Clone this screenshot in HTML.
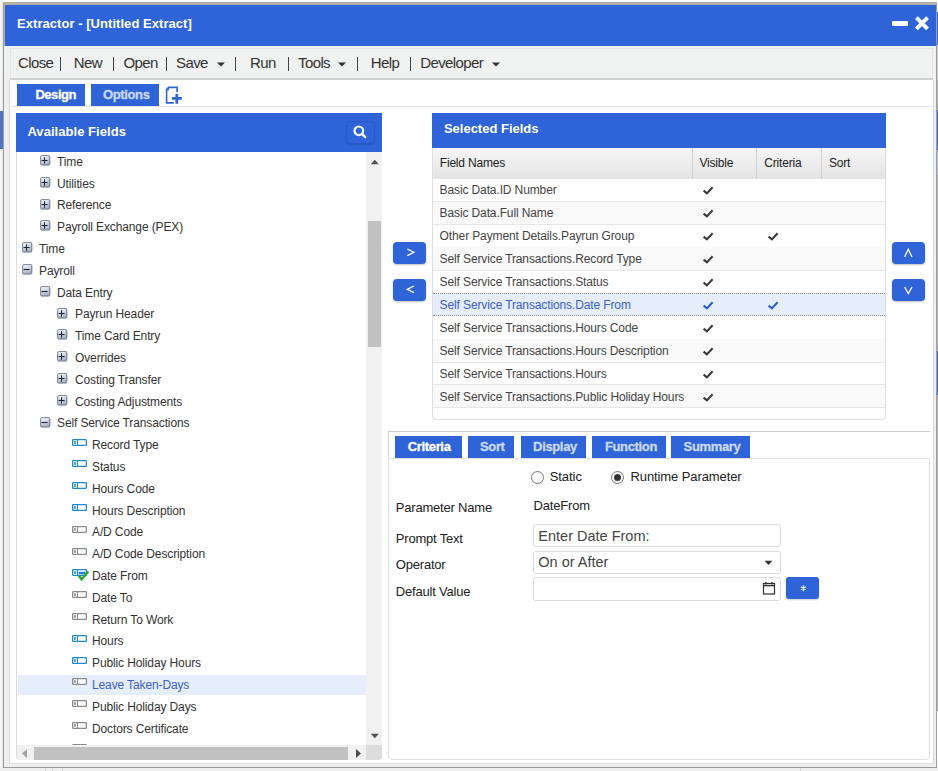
<!DOCTYPE html>
<html><head><meta charset="utf-8">
<style>
*{box-sizing:border-box;margin:0;padding:0}
html,body{width:938px;height:771px;overflow:hidden;background:#fff;font-family:"Liberation Sans",sans-serif;color:#333}
body{position:relative}
.a{position:absolute}
.t{position:absolute;white-space:nowrap;line-height:1}
</style></head><body>
<svg width="0" height="0" style="position:absolute"><defs><linearGradient id="eg" x1="0" y1="0" x2="0.3" y2="1"><stop offset="0" stop-color="#f4f6fa"/><stop offset="0.5" stop-color="#d3d9e3"/><stop offset="1" stop-color="#aab3c3"/></linearGradient></defs></svg>
<div class="a" style="left:0px;top:767px;width:938px;height:4px;background:#eeeeee"></div>
<div class="a" style="left:45px;top:768px;width:1px;height:3px;background:#d6d6d6"></div>
<div class="a" style="left:52px;top:768px;width:1px;height:3px;background:#d6d6d6"></div>
<div class="a" style="left:62px;top:768px;width:1px;height:3px;background:#d6d6d6"></div>
<div class="a" style="left:800px;top:768px;width:1px;height:3px;background:#d6d6d6"></div>
<div class="a" style="left:0px;top:0px;width:3px;height:767px;background:linear-gradient(to right,#fdfdfd,#e4e4e4)"></div>
<div class="a" style="left:0px;top:111px;width:3px;height:38px;background:#4f75c9"></div>
<div class="a" style="left:937px;top:45px;width:1px;height:666px;background:#b4b4b4"></div>
<div class="a" style="left:937px;top:12px;width:1px;height:33px;background:#3d6bd5"></div>
<div class="a" style="left:937px;top:45px;width:1px;height:35px;background:#c9c9c9"></div>
<div class="a" style="left:937px;top:110px;width:1px;height:40px;background:#3d6bd5"></div>
<div class="a" style="left:937px;top:150px;width:1px;height:25px;background:#b8c4dc"></div>
<div class="a" style="left:937px;top:351px;width:1px;height:44px;background:#3d6bd5"></div>
<div class="a" style="left:3px;top:2px;width:934px;height:766px;background:#efefef;border:1px solid #9c9c9c;border-top:3px solid #b0b0b0"></div>
<div class="a" style="left:4px;top:4px;width:932px;height:1px;background:#b3aea6"></div>
<div class="a" style="left:4px;top:4px;width:1px;height:42px;background:#b3aea6"></div>
<div class="a" style="left:5px;top:5px;width:931px;height:41px;background:#2e64d8"></div>
<div class="t" style="left:17px;top:17.10px;font-size:13px;font-weight:700;color:#fff;letter-spacing:0.05px;">Extractor - [Untitled Extract]</div>
<div class="a" style="left:892px;top:21px;width:16px;height:5px;background:#fff;border-radius:1px"></div>
<svg class="a" style="left:913px;top:14px" width="18" height="18" viewBox="0 0 18 18"><path d="M3.4 3.6 L14.6 14.8 M14.6 3.6 L3.4 14.8" stroke="#fff" stroke-width="3.9"/></svg>
<div class="a" style="left:5px;top:46px;width:931px;height:33px;background:#f0f1f1"></div>
<div class="a" style="left:10px;top:48px;width:923px;height:31px;border-top:1px solid #e3e4e4;border-left:1px solid #e3e4e4;border-right:1px solid #e3e4e4"></div>
<div class="a" style="left:10px;top:78px;width:923px;height:2px;background:#cfcfcf"></div>
<div class="t" style="left:18px;top:54.90px;font-size:15px;font-weight:400;color:#333;letter-spacing:-0.6px;">Close</div>
<div class="t" style="left:73.8px;top:54.90px;font-size:15px;font-weight:400;color:#333;letter-spacing:-0.6px;">New</div>
<div class="t" style="left:123.4px;top:54.90px;font-size:15px;font-weight:400;color:#333;letter-spacing:-0.6px;">Open</div>
<div class="t" style="left:176px;top:54.90px;font-size:15px;font-weight:400;color:#333;letter-spacing:-0.6px;">Save</div>
<div class="t" style="left:250px;top:54.90px;font-size:15px;font-weight:400;color:#333;letter-spacing:-0.6px;">Run</div>
<div class="t" style="left:298px;top:54.90px;font-size:15px;font-weight:400;color:#333;letter-spacing:-0.6px;">Tools</div>
<div class="t" style="left:370.7px;top:54.90px;font-size:15px;font-weight:400;color:#333;letter-spacing:-0.6px;">Help</div>
<div class="t" style="left:420.2px;top:54.90px;font-size:15px;font-weight:400;color:#333;letter-spacing:-0.6px;">Developer</div>
<div class="a" style="left:59.8px;top:56.8px;width:1.2px;height:14.7px;background:#444"></div>
<div class="a" style="left:112.8px;top:56.8px;width:1.2px;height:14.7px;background:#444"></div>
<div class="a" style="left:166.1px;top:56.8px;width:1.2px;height:14.7px;background:#444"></div>
<div class="a" style="left:235.1px;top:56.8px;width:1.2px;height:14.7px;background:#444"></div>
<div class="a" style="left:287.5px;top:56.8px;width:1.2px;height:14.7px;background:#444"></div>
<div class="a" style="left:356.9px;top:56.8px;width:1.2px;height:14.7px;background:#444"></div>
<div class="a" style="left:409.8px;top:56.8px;width:1.2px;height:14.7px;background:#444"></div>
<svg class="a" style="left:217px;top:62px" width="8" height="5" viewBox="0 0 8 5"><path d="M0 0.5 L8 0.5 L4 4.5 Z" fill="#333"/></svg>
<svg class="a" style="left:338px;top:62px" width="8" height="5" viewBox="0 0 8 5"><path d="M0 0.5 L8 0.5 L4 4.5 Z" fill="#333"/></svg>
<svg class="a" style="left:492px;top:62px" width="8" height="5" viewBox="0 0 8 5"><path d="M0 0.5 L8 0.5 L4 4.5 Z" fill="#333"/></svg>
<div class="a" style="left:9px;top:80px;width:925px;height:684px;background:#fff;border-left:1px solid #dcdcdc;border-right:1px solid #dcdcdc;border-bottom:1px solid #e0e0e0"></div>
<div class="a" style="left:17px;top:84px;width:68px;height:22px;background:#2e64d8"></div>
<div class="t" style="left:35.4px;top:88.10px;font-size:13px;font-weight:700;color:#fff;letter-spacing:-0.45px;-webkit-text-stroke:0.3px #fff">Design</div>
<div class="a" style="left:91px;top:84px;width:68px;height:22px;background:#2e64d8"></div>
<div class="t" style="left:102.9px;top:88.10px;font-size:13px;font-weight:700;color:#c9d8f6;letter-spacing:-0.35px;-webkit-text-stroke:0.3px #c9d8f6">Options</div>
<div class="a" style="left:11px;top:106px;width:922px;height:1px;background:#e6e6e6"></div>
<svg class="a" style="left:164px;top:85px" width="20" height="20" viewBox="0 0 20 20">
<path d="M9.8 17.9 H2.6 V4.6 L4.6 2.4 H13.1 V7.3" fill="none" stroke="#2e64d8" stroke-width="1.6"/>
<path d="M2.6 5.2 L5.2 2.4 V5.2 Z" fill="#2e64d8"/>
<path d="M8 13.4 H17.9 M12.8 9 V18.7" stroke="#2e64d8" stroke-width="2.7"/>
</svg>
<div class="a" style="left:16px;top:113px;width:366px;height:38.5px;background:#2e64d8"></div>
<div class="t" style="left:27.4px;top:124.50px;font-size:13px;font-weight:700;color:#fff;letter-spacing:0.05px;">Available Fields</div>
<div class="a" style="left:346px;top:120.5px;width:28.5px;height:23px;border-radius:4px;border:1px solid rgba(0,0,40,0.10);box-shadow:0 1px 1px rgba(0,0,40,0.12)"></div>
<svg class="a" style="left:352px;top:124px" width="16" height="16" viewBox="0 0 16 16"><circle cx="6.8" cy="6.8" r="4.3" fill="none" stroke="#fff" stroke-width="2.2"/><path d="M10 10 L13.2 13.2" stroke="#fff" stroke-width="2.4" stroke-linecap="round"/></svg>
<div class="a" style="left:16px;top:151.5px;width:366px;height:608.5px;background:#fff;border-left:1px solid #dcdcdc;border-bottom-right-radius:4px;border-bottom-left-radius:4px;overflow:hidden"></div>
<div class="a" style="left:18px;top:675.0px;width:348px;height:19.7px;background:#e6edfb"></div>
<svg class="a" style="left:40px;top:155px" width="11" height="11" viewBox="0 0 11 11"><rect x="0.55" y="0.55" width="9.3" height="9.5" rx="1.6" fill="url(#eg)" stroke="#838ea3" stroke-width="1.1"/><path d="M1.5 9.9 H9.3 M9.4 1.8 V9.6" stroke="#75809a" stroke-width="0.9" opacity="0.7"/><path d="M1.5 5.5 H7.6" stroke="#1b2540" stroke-width="1.1"/><path d="M4.5 2.2 V8.8" stroke="#1b2540" stroke-width="1"/></svg>
<div class="t" style="left:57px;top:155.74px;font-size:12px;font-weight:400;color:#333;letter-spacing:-0.12px;">Time</div>
<svg class="a" style="left:40px;top:177px" width="11" height="11" viewBox="0 0 11 11"><rect x="0.55" y="0.55" width="9.3" height="9.5" rx="1.6" fill="url(#eg)" stroke="#838ea3" stroke-width="1.1"/><path d="M1.5 9.9 H9.3 M9.4 1.8 V9.6" stroke="#75809a" stroke-width="0.9" opacity="0.7"/><path d="M1.5 5.5 H7.6" stroke="#1b2540" stroke-width="1.1"/><path d="M4.5 2.2 V8.8" stroke="#1b2540" stroke-width="1"/></svg>
<div class="t" style="left:57px;top:177.54px;font-size:12px;font-weight:400;color:#333;letter-spacing:-0.12px;">Utilities</div>
<svg class="a" style="left:40px;top:199px" width="11" height="11" viewBox="0 0 11 11"><rect x="0.55" y="0.55" width="9.3" height="9.5" rx="1.6" fill="url(#eg)" stroke="#838ea3" stroke-width="1.1"/><path d="M1.5 9.9 H9.3 M9.4 1.8 V9.6" stroke="#75809a" stroke-width="0.9" opacity="0.7"/><path d="M1.5 5.5 H7.6" stroke="#1b2540" stroke-width="1.1"/><path d="M4.5 2.2 V8.8" stroke="#1b2540" stroke-width="1"/></svg>
<div class="t" style="left:57px;top:199.34px;font-size:12px;font-weight:400;color:#333;letter-spacing:-0.12px;">Reference</div>
<svg class="a" style="left:40px;top:220px" width="11" height="11" viewBox="0 0 11 11"><rect x="0.55" y="0.55" width="9.3" height="9.5" rx="1.6" fill="url(#eg)" stroke="#838ea3" stroke-width="1.1"/><path d="M1.5 9.9 H9.3 M9.4 1.8 V9.6" stroke="#75809a" stroke-width="0.9" opacity="0.7"/><path d="M1.5 5.5 H7.6" stroke="#1b2540" stroke-width="1.1"/><path d="M4.5 2.2 V8.8" stroke="#1b2540" stroke-width="1"/></svg>
<div class="t" style="left:57px;top:221.14px;font-size:12px;font-weight:400;color:#333;letter-spacing:-0.12px;">Payroll Exchange (PEX)</div>
<svg class="a" style="left:22px;top:242px" width="11" height="11" viewBox="0 0 11 11"><rect x="0.55" y="0.55" width="9.3" height="9.5" rx="1.6" fill="url(#eg)" stroke="#838ea3" stroke-width="1.1"/><path d="M1.5 9.9 H9.3 M9.4 1.8 V9.6" stroke="#75809a" stroke-width="0.9" opacity="0.7"/><path d="M1.5 5.5 H7.6" stroke="#1b2540" stroke-width="1.1"/><path d="M4.5 2.2 V8.8" stroke="#1b2540" stroke-width="1"/></svg>
<div class="t" style="left:39px;top:242.94px;font-size:12px;font-weight:400;color:#333;letter-spacing:-0.12px;">Time</div>
<svg class="a" style="left:22px;top:264px" width="11" height="11" viewBox="0 0 11 11"><rect x="0.55" y="0.55" width="9.3" height="9.5" rx="1.6" fill="url(#eg)" stroke="#838ea3" stroke-width="1.1"/><path d="M1.5 9.9 H9.3 M9.4 1.8 V9.6" stroke="#75809a" stroke-width="0.9" opacity="0.7"/><path d="M1.5 5.5 H7.6" stroke="#1b2540" stroke-width="1.1"/></svg>
<div class="t" style="left:39px;top:264.74px;font-size:12px;font-weight:400;color:#333;letter-spacing:-0.12px;">Payroll</div>
<svg class="a" style="left:40px;top:286px" width="11" height="11" viewBox="0 0 11 11"><rect x="0.55" y="0.55" width="9.3" height="9.5" rx="1.6" fill="url(#eg)" stroke="#838ea3" stroke-width="1.1"/><path d="M1.5 9.9 H9.3 M9.4 1.8 V9.6" stroke="#75809a" stroke-width="0.9" opacity="0.7"/><path d="M1.5 5.5 H7.6" stroke="#1b2540" stroke-width="1.1"/></svg>
<div class="t" style="left:57px;top:286.54px;font-size:12px;font-weight:400;color:#333;letter-spacing:-0.12px;">Data Entry</div>
<svg class="a" style="left:57px;top:308px" width="11" height="11" viewBox="0 0 11 11"><rect x="0.55" y="0.55" width="9.3" height="9.5" rx="1.6" fill="url(#eg)" stroke="#838ea3" stroke-width="1.1"/><path d="M1.5 9.9 H9.3 M9.4 1.8 V9.6" stroke="#75809a" stroke-width="0.9" opacity="0.7"/><path d="M1.5 5.5 H7.6" stroke="#1b2540" stroke-width="1.1"/><path d="M4.5 2.2 V8.8" stroke="#1b2540" stroke-width="1"/></svg>
<div class="t" style="left:75px;top:308.34px;font-size:12px;font-weight:400;color:#333;letter-spacing:-0.12px;">Payrun Header</div>
<svg class="a" style="left:57px;top:329px" width="11" height="11" viewBox="0 0 11 11"><rect x="0.55" y="0.55" width="9.3" height="9.5" rx="1.6" fill="url(#eg)" stroke="#838ea3" stroke-width="1.1"/><path d="M1.5 9.9 H9.3 M9.4 1.8 V9.6" stroke="#75809a" stroke-width="0.9" opacity="0.7"/><path d="M1.5 5.5 H7.6" stroke="#1b2540" stroke-width="1.1"/><path d="M4.5 2.2 V8.8" stroke="#1b2540" stroke-width="1"/></svg>
<div class="t" style="left:75px;top:330.14px;font-size:12px;font-weight:400;color:#333;letter-spacing:-0.12px;">Time Card Entry</div>
<svg class="a" style="left:57px;top:351px" width="11" height="11" viewBox="0 0 11 11"><rect x="0.55" y="0.55" width="9.3" height="9.5" rx="1.6" fill="url(#eg)" stroke="#838ea3" stroke-width="1.1"/><path d="M1.5 9.9 H9.3 M9.4 1.8 V9.6" stroke="#75809a" stroke-width="0.9" opacity="0.7"/><path d="M1.5 5.5 H7.6" stroke="#1b2540" stroke-width="1.1"/><path d="M4.5 2.2 V8.8" stroke="#1b2540" stroke-width="1"/></svg>
<div class="t" style="left:75px;top:351.94px;font-size:12px;font-weight:400;color:#333;letter-spacing:-0.12px;">Overrides</div>
<svg class="a" style="left:57px;top:373px" width="11" height="11" viewBox="0 0 11 11"><rect x="0.55" y="0.55" width="9.3" height="9.5" rx="1.6" fill="url(#eg)" stroke="#838ea3" stroke-width="1.1"/><path d="M1.5 9.9 H9.3 M9.4 1.8 V9.6" stroke="#75809a" stroke-width="0.9" opacity="0.7"/><path d="M1.5 5.5 H7.6" stroke="#1b2540" stroke-width="1.1"/><path d="M4.5 2.2 V8.8" stroke="#1b2540" stroke-width="1"/></svg>
<div class="t" style="left:75px;top:373.74px;font-size:12px;font-weight:400;color:#333;letter-spacing:-0.12px;">Costing Transfer</div>
<svg class="a" style="left:57px;top:395px" width="11" height="11" viewBox="0 0 11 11"><rect x="0.55" y="0.55" width="9.3" height="9.5" rx="1.6" fill="url(#eg)" stroke="#838ea3" stroke-width="1.1"/><path d="M1.5 9.9 H9.3 M9.4 1.8 V9.6" stroke="#75809a" stroke-width="0.9" opacity="0.7"/><path d="M1.5 5.5 H7.6" stroke="#1b2540" stroke-width="1.1"/><path d="M4.5 2.2 V8.8" stroke="#1b2540" stroke-width="1"/></svg>
<div class="t" style="left:75px;top:395.54px;font-size:12px;font-weight:400;color:#333;letter-spacing:-0.12px;">Costing Adjustments</div>
<svg class="a" style="left:40px;top:417px" width="11" height="11" viewBox="0 0 11 11"><rect x="0.55" y="0.55" width="9.3" height="9.5" rx="1.6" fill="url(#eg)" stroke="#838ea3" stroke-width="1.1"/><path d="M1.5 9.9 H9.3 M9.4 1.8 V9.6" stroke="#75809a" stroke-width="0.9" opacity="0.7"/><path d="M1.5 5.5 H7.6" stroke="#1b2540" stroke-width="1.1"/></svg>
<div class="t" style="left:57px;top:417.34px;font-size:12px;font-weight:400;color:#333;letter-spacing:-0.12px;">Self Service Transactions</div>
<svg class="a" style="left:72px;top:439px" width="15" height="7" viewBox="0 0 15 7"><rect x="0.65" y="0.65" width="13.7" height="5.7" rx="0.7" fill="#fff" stroke="#1f8ad3" stroke-width="1.3"/><path d="M5.5 1 V6" stroke="#1f8ad3" stroke-width="1"/><rect x="2" y="2.2" width="2" height="2.6" fill="#1f8ad3" opacity="0.85"/></svg>
<div class="t" style="left:92px;top:439.14px;font-size:12px;font-weight:400;color:#333;letter-spacing:-0.12px;">Record Type</div>
<svg class="a" style="left:72px;top:460px" width="15" height="7" viewBox="0 0 15 7"><rect x="0.65" y="0.65" width="13.7" height="5.7" rx="0.7" fill="#fff" stroke="#1f8ad3" stroke-width="1.3"/><path d="M5.5 1 V6" stroke="#1f8ad3" stroke-width="1"/><rect x="2" y="2.2" width="2" height="2.6" fill="#1f8ad3" opacity="0.85"/></svg>
<div class="t" style="left:92px;top:460.94px;font-size:12px;font-weight:400;color:#333;letter-spacing:-0.12px;">Status</div>
<svg class="a" style="left:72px;top:482px" width="15" height="7" viewBox="0 0 15 7"><rect x="0.65" y="0.65" width="13.7" height="5.7" rx="0.7" fill="#fff" stroke="#1f8ad3" stroke-width="1.3"/><path d="M5.5 1 V6" stroke="#1f8ad3" stroke-width="1"/><rect x="2" y="2.2" width="2" height="2.6" fill="#1f8ad3" opacity="0.85"/></svg>
<div class="t" style="left:92px;top:482.74px;font-size:12px;font-weight:400;color:#333;letter-spacing:-0.12px;">Hours Code</div>
<svg class="a" style="left:72px;top:504px" width="15" height="7" viewBox="0 0 15 7"><rect x="0.65" y="0.65" width="13.7" height="5.7" rx="0.7" fill="#fff" stroke="#1f8ad3" stroke-width="1.3"/><path d="M5.5 1 V6" stroke="#1f8ad3" stroke-width="1"/><rect x="2" y="2.2" width="2" height="2.6" fill="#1f8ad3" opacity="0.85"/></svg>
<div class="t" style="left:92px;top:504.54px;font-size:12px;font-weight:400;color:#333;letter-spacing:-0.12px;">Hours Description</div>
<svg class="a" style="left:72px;top:526px" width="15" height="7" viewBox="0 0 15 7"><rect x="0.65" y="0.65" width="13.7" height="5.7" rx="0.7" fill="#fff" stroke="#8a8a8a" stroke-width="1.3"/><path d="M5.5 1 V6" stroke="#8a8a8a" stroke-width="1"/><rect x="2" y="2.2" width="2" height="2.6" fill="#8a8a8a" opacity="0.85"/></svg>
<div class="t" style="left:92px;top:526.34px;font-size:12px;font-weight:400;color:#333;letter-spacing:-0.12px;">A/D Code</div>
<svg class="a" style="left:72px;top:548px" width="15" height="7" viewBox="0 0 15 7"><rect x="0.65" y="0.65" width="13.7" height="5.7" rx="0.7" fill="#fff" stroke="#8a8a8a" stroke-width="1.3"/><path d="M5.5 1 V6" stroke="#8a8a8a" stroke-width="1"/><rect x="2" y="2.2" width="2" height="2.6" fill="#8a8a8a" opacity="0.85"/></svg>
<div class="t" style="left:92px;top:548.14px;font-size:12px;font-weight:400;color:#333;letter-spacing:-0.12px;">A/D Code Description</div>
<svg class="a" style="left:72px;top:569px" width="15" height="7" viewBox="0 0 15 7"><rect x="0.65" y="0.65" width="13.7" height="5.7" rx="0.7" fill="#fff" stroke="#1f8ad3" stroke-width="1.3"/><path d="M5.5 1 V6" stroke="#1f8ad3" stroke-width="1"/><rect x="2" y="2.2" width="2" height="2.6" fill="#1f8ad3" opacity="0.85"/></svg>
<svg class="a" style="left:75px;top:569.9px" width="16" height="13" viewBox="0 0 16 13"><path d="M7.5 1.6 H2 V5" fill="none" stroke="#fff" stroke-width="0"/><rect x="3.6" y="1.8" width="6.5" height="2.4" fill="#2a7fd0"/><path d="M3.8 5.7 L6.6 9.4 L13.3 1.4" fill="none" stroke="#2aa52a" stroke-width="2.4"/></svg>
<div class="t" style="left:92px;top:569.94px;font-size:12px;font-weight:400;color:#333;letter-spacing:-0.12px;">Date From</div>
<svg class="a" style="left:72px;top:591px" width="15" height="7" viewBox="0 0 15 7"><rect x="0.65" y="0.65" width="13.7" height="5.7" rx="0.7" fill="#fff" stroke="#8a8a8a" stroke-width="1.3"/><path d="M5.5 1 V6" stroke="#8a8a8a" stroke-width="1"/><rect x="2" y="2.2" width="2" height="2.6" fill="#8a8a8a" opacity="0.85"/></svg>
<div class="t" style="left:92px;top:591.74px;font-size:12px;font-weight:400;color:#333;letter-spacing:-0.12px;">Date To</div>
<svg class="a" style="left:72px;top:613px" width="15" height="7" viewBox="0 0 15 7"><rect x="0.65" y="0.65" width="13.7" height="5.7" rx="0.7" fill="#fff" stroke="#8a8a8a" stroke-width="1.3"/><path d="M5.5 1 V6" stroke="#8a8a8a" stroke-width="1"/><rect x="2" y="2.2" width="2" height="2.6" fill="#8a8a8a" opacity="0.85"/></svg>
<div class="t" style="left:92px;top:613.54px;font-size:12px;font-weight:400;color:#333;letter-spacing:-0.12px;">Return To Work</div>
<svg class="a" style="left:72px;top:635px" width="15" height="7" viewBox="0 0 15 7"><rect x="0.65" y="0.65" width="13.7" height="5.7" rx="0.7" fill="#fff" stroke="#1f8ad3" stroke-width="1.3"/><path d="M5.5 1 V6" stroke="#1f8ad3" stroke-width="1"/><rect x="2" y="2.2" width="2" height="2.6" fill="#1f8ad3" opacity="0.85"/></svg>
<div class="t" style="left:92px;top:635.34px;font-size:12px;font-weight:400;color:#333;letter-spacing:-0.12px;">Hours</div>
<svg class="a" style="left:72px;top:657px" width="15" height="7" viewBox="0 0 15 7"><rect x="0.65" y="0.65" width="13.7" height="5.7" rx="0.7" fill="#fff" stroke="#1f8ad3" stroke-width="1.3"/><path d="M5.5 1 V6" stroke="#1f8ad3" stroke-width="1"/><rect x="2" y="2.2" width="2" height="2.6" fill="#1f8ad3" opacity="0.85"/></svg>
<div class="t" style="left:92px;top:657.14px;font-size:12px;font-weight:400;color:#333;letter-spacing:-0.12px;">Public Holiday Hours</div>
<svg class="a" style="left:72px;top:678px" width="15" height="7" viewBox="0 0 15 7"><rect x="0.65" y="0.65" width="13.7" height="5.7" rx="0.7" fill="#fff" stroke="#8a8a8a" stroke-width="1.3"/><path d="M5.5 1 V6" stroke="#8a8a8a" stroke-width="1"/><rect x="2" y="2.2" width="2" height="2.6" fill="#8a8a8a" opacity="0.85"/></svg>
<div class="t" style="left:92px;top:678.94px;font-size:12px;font-weight:400;color:#3a5fcf;letter-spacing:-0.12px;">Leave Taken-Days</div>
<svg class="a" style="left:72px;top:700px" width="15" height="7" viewBox="0 0 15 7"><rect x="0.65" y="0.65" width="13.7" height="5.7" rx="0.7" fill="#fff" stroke="#8a8a8a" stroke-width="1.3"/><path d="M5.5 1 V6" stroke="#8a8a8a" stroke-width="1"/><rect x="2" y="2.2" width="2" height="2.6" fill="#8a8a8a" opacity="0.85"/></svg>
<div class="t" style="left:92px;top:700.74px;font-size:12px;font-weight:400;color:#333;letter-spacing:-0.12px;">Public Holiday Days</div>
<svg class="a" style="left:72px;top:722px" width="15" height="7" viewBox="0 0 15 7"><rect x="0.65" y="0.65" width="13.7" height="5.7" rx="0.7" fill="#fff" stroke="#8a8a8a" stroke-width="1.3"/><path d="M5.5 1 V6" stroke="#8a8a8a" stroke-width="1"/><rect x="2" y="2.2" width="2" height="2.6" fill="#8a8a8a" opacity="0.85"/></svg>
<div class="t" style="left:92px;top:722.54px;font-size:12px;font-weight:400;color:#333;letter-spacing:-0.12px;">Doctors Certificate</div>
<svg class="a" style="left:72px;top:744px" width="15" height="7" viewBox="0 0 15 7"><rect x="0.65" y="0.65" width="13.7" height="5.7" rx="0.7" fill="#fff" stroke="#8a8a8a" stroke-width="1.3"/><path d="M5.5 1 V6" stroke="#8a8a8a" stroke-width="1"/><rect x="2" y="2.2" width="2" height="2.6" fill="#8a8a8a" opacity="0.85"/></svg>
<div class="a" style="left:366px;top:151.5px;width:16px;height:593.5px;background:#f1f1f1"></div>
<div class="a" style="left:368px;top:221px;width:13px;height:126px;background:#c1c1c1"></div>
<svg class="a" style="left:370px;top:159px" width="10" height="6" viewBox="0 0 10 6"><path d="M0.8 5.2 L8.8 5.2 L4.8 0.8 Z" fill="#505050"/></svg>
<svg class="a" style="left:370px;top:733px" width="10" height="6" viewBox="0 0 10 6"><path d="M0.8 0.8 L8.8 0.8 L4.8 5.2 Z" fill="#505050"/></svg>
<div class="a" style="left:17px;top:745px;width:349px;height:15px;background:#f1f1f1"></div>
<div class="a" style="left:34px;top:747px;width:314px;height:13px;background:#c1c1c1"></div>
<svg class="a" style="left:21px;top:748px" width="7" height="11" viewBox="0 0 7 11"><path d="M6 1 L6 10 L1 5.5 Z" fill="#a3a3a3"/></svg>
<svg class="a" style="left:355px;top:748px" width="7" height="11" viewBox="0 0 7 11"><path d="M1 1 L1 10 L6 5.5 Z" fill="#505050"/></svg>
<div class="a" style="left:366px;top:745px;width:16px;height:15px;background:#dcdcdc;border-bottom-right-radius:4px"></div>
<div class="a" style="left:393px;top:242px;width:33px;height:22px;background:#2e64d8;border-radius:4px;box-shadow:0 1px 2px rgba(0,0,0,0.25);color:#fff;font-size:14px;line-height:22px;text-align:center"></div>
<div class="a" style="left:393px;top:279px;width:33px;height:22px;background:#2e64d8;border-radius:4px;box-shadow:0 1px 2px rgba(0,0,0,0.25);color:#fff;font-size:14px;line-height:22px;text-align:center"></div>
<div class="a" style="left:892px;top:242px;width:33px;height:22px;background:#2e64d8;border-radius:4px;box-shadow:0 1px 2px rgba(0,0,0,0.25);color:#fff;font-size:14px;line-height:22px;text-align:center"></div>
<div class="a" style="left:892px;top:279.3px;width:33px;height:21.7px;background:#2e64d8;border-radius:4px;box-shadow:0 1px 2px rgba(0,0,0,0.25);color:#fff;font-size:14px;line-height:21.7px;text-align:center"></div>
<svg class="a" style="left:406px;top:248px" width="10" height="10" viewBox="0 0 10 10"><path d="M1.3 1 L7.9 4.3 L1.3 7.6" fill="none" stroke="#fff" stroke-width="1.3"/></svg>
<svg class="a" style="left:406px;top:285px" width="10" height="10" viewBox="0 0 10 10"><path d="M7.9 1 L1.3 4.3 L7.9 7.6" fill="none" stroke="#fff" stroke-width="1.3"/></svg>
<svg class="a" style="left:903px;top:248px" width="11" height="10" viewBox="0 0 11 10"><path d="M1.6 9 L5.3 1.3 L9 9" fill="none" stroke="#fff" stroke-width="1.3"/></svg>
<svg class="a" style="left:903px;top:286px" width="11" height="9" viewBox="0 0 11 9"><path d="M1.6 1 L5.3 7.6 L9 1" fill="none" stroke="#fff" stroke-width="1.3"/></svg>
<div class="a" style="left:432.3px;top:113.4px;width:453.5px;height:34.6px;background:#2e64d8"></div>
<div class="t" style="left:443.9px;top:121.80px;font-size:13px;font-weight:700;color:#fff;">Selected Fields</div>
<div class="a" style="left:432.3px;top:148px;width:453.5px;height:271.6px;background:#fff;border:1px solid #dedede;border-top:none;border-radius:0 0 4px 4px"></div>
<div class="a" style="left:433px;top:148px;width:452px;height:30.6px;background:linear-gradient(#f6f6f6,#e4e4e4)"></div>
<div class="a" style="left:692.1px;top:148px;width:1px;height:30.6px;background:#d2d2d2"></div>
<div class="a" style="left:755.8px;top:148px;width:1px;height:30.6px;background:#d2d2d2"></div>
<div class="a" style="left:821.0px;top:148px;width:1px;height:30.6px;background:#d2d2d2"></div>
<div class="t" style="left:439.8px;top:156.74px;font-size:12px;font-weight:400;color:#222;letter-spacing:-0.2px;">Field Names</div>
<div class="t" style="left:699.4px;top:156.74px;font-size:12px;font-weight:400;color:#222;letter-spacing:-0.2px;">Visible</div>
<div class="t" style="left:764.3px;top:156.74px;font-size:12px;font-weight:400;color:#222;letter-spacing:-0.2px;">Criteria</div>
<div class="t" style="left:829px;top:156.74px;font-size:12px;font-weight:400;color:#222;letter-spacing:-0.2px;">Sort</div>
<div class="a" style="left:433px;top:201.1px;width:452px;height:1px;background:#e6e6e6"></div>
<div class="t" style="left:439.6px;top:183.64px;font-size:12px;font-weight:400;color:#444;letter-spacing:-0.12px;">Basic Data.ID Number</div>
<svg class="a" style="left:701.5px;top:185.4px" width="12" height="10" viewBox="0 0 12 10"><path d="M1.6 5.6 L4.9 8.4 L10.6 2.2" fill="none" stroke="#3a3a3a" stroke-width="2.1"/></svg>
<div class="a" style="left:433px;top:201.51999999999998px;width:452px;height:22.92px;background:#f9f9f9"></div>
<div class="a" style="left:433px;top:224.01999999999998px;width:452px;height:1px;background:#e6e6e6"></div>
<div class="t" style="left:439.6px;top:206.64px;font-size:12px;font-weight:400;color:#444;letter-spacing:-0.12px;">Basic Data.Full Name</div>
<svg class="a" style="left:701.5px;top:208.4px" width="12" height="10" viewBox="0 0 12 10"><path d="M1.6 5.6 L4.9 8.4 L10.6 2.2" fill="none" stroke="#3a3a3a" stroke-width="2.1"/></svg>
<div class="a" style="left:433px;top:246.94px;width:452px;height:1px;background:#e6e6e6"></div>
<div class="t" style="left:439.6px;top:229.64px;font-size:12px;font-weight:400;color:#444;letter-spacing:-0.12px;">Other Payment Details.Payrun Group</div>
<svg class="a" style="left:701.5px;top:231.4px" width="12" height="10" viewBox="0 0 12 10"><path d="M1.6 5.6 L4.9 8.4 L10.6 2.2" fill="none" stroke="#3a3a3a" stroke-width="2.1"/></svg>
<svg class="a" style="left:766.5px;top:231.4px" width="12" height="10" viewBox="0 0 12 10"><path d="M1.6 5.6 L4.9 8.4 L10.6 2.2" fill="none" stroke="#3a3a3a" stroke-width="2.1"/></svg>
<div class="a" style="left:433px;top:247.36px;width:452px;height:22.92px;background:#f9f9f9"></div>
<div class="a" style="left:433px;top:269.86px;width:452px;height:1px;background:#e6e6e6"></div>
<div class="t" style="left:439.6px;top:252.64px;font-size:12px;font-weight:400;color:#444;letter-spacing:-0.12px;">Self Service Transactions.Record Type</div>
<svg class="a" style="left:701.5px;top:254.4px" width="12" height="10" viewBox="0 0 12 10"><path d="M1.6 5.6 L4.9 8.4 L10.6 2.2" fill="none" stroke="#3a3a3a" stroke-width="2.1"/></svg>
<div class="a" style="left:433px;top:292.78px;width:452px;height:1px;background:#e6e6e6"></div>
<div class="t" style="left:439.6px;top:275.64px;font-size:12px;font-weight:400;color:#444;letter-spacing:-0.12px;">Self Service Transactions.Status</div>
<svg class="a" style="left:701.5px;top:277.4px" width="12" height="10" viewBox="0 0 12 10"><path d="M1.6 5.6 L4.9 8.4 L10.6 2.2" fill="none" stroke="#3a3a3a" stroke-width="2.1"/></svg>
<div class="a" style="left:433px;top:293px;width:452px;height:23.4px;background:#e6edfb;border-top:1px dotted #8a8a8a;border-bottom:1px dotted #8a8a8a"></div>
<div class="t" style="left:439.6px;top:298.64px;font-size:12px;font-weight:400;color:#3a5fcf;letter-spacing:-0.12px;">Self Service Transactions.Date From</div>
<svg class="a" style="left:701.5px;top:300.4px" width="12" height="10" viewBox="0 0 12 10"><path d="M1.6 5.6 L4.9 8.4 L10.6 2.2" fill="none" stroke="#2a5bd7" stroke-width="2.1"/></svg>
<svg class="a" style="left:766.5px;top:300.4px" width="12" height="10" viewBox="0 0 12 10"><path d="M1.6 5.6 L4.9 8.4 L10.6 2.2" fill="none" stroke="#2a5bd7" stroke-width="2.1"/></svg>
<div class="a" style="left:433px;top:338.62px;width:452px;height:1px;background:#e6e6e6"></div>
<div class="t" style="left:439.6px;top:321.64px;font-size:12px;font-weight:400;color:#444;letter-spacing:-0.12px;">Self Service Transactions.Hours Code</div>
<svg class="a" style="left:701.5px;top:323.4px" width="12" height="10" viewBox="0 0 12 10"><path d="M1.6 5.6 L4.9 8.4 L10.6 2.2" fill="none" stroke="#3a3a3a" stroke-width="2.1"/></svg>
<div class="a" style="left:433px;top:339.03999999999996px;width:452px;height:22.92px;background:#f9f9f9"></div>
<div class="a" style="left:433px;top:361.53999999999996px;width:452px;height:1px;background:#e6e6e6"></div>
<div class="t" style="left:439.6px;top:344.64px;font-size:12px;font-weight:400;color:#444;letter-spacing:-0.12px;">Self Service Transactions.Hours Description</div>
<svg class="a" style="left:701.5px;top:346.4px" width="12" height="10" viewBox="0 0 12 10"><path d="M1.6 5.6 L4.9 8.4 L10.6 2.2" fill="none" stroke="#3a3a3a" stroke-width="2.1"/></svg>
<div class="a" style="left:433px;top:384.46000000000004px;width:452px;height:1px;background:#e6e6e6"></div>
<div class="t" style="left:439.6px;top:367.64px;font-size:12px;font-weight:400;color:#444;letter-spacing:-0.12px;">Self Service Transactions.Hours</div>
<svg class="a" style="left:701.5px;top:369.4px" width="12" height="10" viewBox="0 0 12 10"><path d="M1.6 5.6 L4.9 8.4 L10.6 2.2" fill="none" stroke="#3a3a3a" stroke-width="2.1"/></svg>
<div class="a" style="left:433px;top:384.88px;width:452px;height:22.92px;background:#f9f9f9"></div>
<div class="a" style="left:433px;top:407.38px;width:452px;height:1px;background:#e6e6e6"></div>
<div class="t" style="left:439.6px;top:390.64px;font-size:12px;font-weight:400;color:#444;letter-spacing:-0.12px;">Self Service Transactions.Public Holiday Hours</div>
<svg class="a" style="left:701.5px;top:392.4px" width="12" height="10" viewBox="0 0 12 10"><path d="M1.6 5.6 L4.9 8.4 L10.6 2.2" fill="none" stroke="#3a3a3a" stroke-width="2.1"/></svg>
<div class="a" style="left:388px;top:431px;width:542px;height:1px;background:#cdcdcd;"></div>
<div class="a" style="left:388px;top:431px;width:1px;height:27px;background:#d0d0d0"></div>
<div class="a" style="left:388px;top:458px;width:542px;height:302.3px;background:#fff;border:1px solid #e0e0e0;border-radius:0 0 4px 4px"></div>
<div class="a" style="left:395px;top:436px;width:67px;height:22px;background:#2e64d8"></div>
<div class="t" style="left:407.8px;top:440.30px;font-size:13px;font-weight:700;color:#fff;letter-spacing:-0.35px;-webkit-text-stroke:0.3px #fff">Criteria</div>
<div class="a" style="left:468px;top:436px;width:45.7px;height:22px;background:#2e64d8"></div>
<div class="t" style="left:480px;top:440.30px;font-size:13px;font-weight:700;color:#c9d8f6;letter-spacing:-0.35px;-webkit-text-stroke:0.3px #c9d8f6">Sort</div>
<div class="a" style="left:521px;top:436px;width:65px;height:22px;background:#2e64d8"></div>
<div class="t" style="left:533.1px;top:440.30px;font-size:13px;font-weight:700;color:#c9d8f6;letter-spacing:-0.35px;-webkit-text-stroke:0.3px #c9d8f6">Display</div>
<div class="a" style="left:592px;top:436px;width:73.7px;height:22px;background:#2e64d8"></div>
<div class="t" style="left:604.9px;top:440.30px;font-size:13px;font-weight:700;color:#c9d8f6;letter-spacing:-0.35px;-webkit-text-stroke:0.3px #c9d8f6">Function</div>
<div class="a" style="left:671px;top:436px;width:78.7px;height:22px;background:#2e64d8"></div>
<div class="t" style="left:683.6px;top:440.30px;font-size:13px;font-weight:700;color:#c9d8f6;letter-spacing:-0.35px;-webkit-text-stroke:0.3px #c9d8f6">Summary</div>
<div class="a" style="left:531px;top:470.5px;width:13px;height:13px;border-radius:50%;border:1px solid #767676;background:#fff"></div>
<div class="t" style="left:549.7px;top:470.20px;font-size:13px;font-weight:400;color:#222;letter-spacing:-0.05px;">Static</div>
<div class="a" style="left:611px;top:470.5px;width:13px;height:13px;border-radius:50%;border:1px solid #767676;background:#fff"></div>
<div class="a" style="left:614px;top:473.5px;width:7px;height:7px;border-radius:50%;background:#333"></div>
<div class="t" style="left:630.5px;top:470.20px;font-size:13px;font-weight:400;color:#222;letter-spacing:-0.1px;">Runtime Parameter</div>
<div class="t" style="left:395.8px;top:501.10px;font-size:13px;font-weight:400;color:#222;letter-spacing:-0.2px;">Parameter Name</div>
<div class="t" style="left:395.8px;top:532.10px;font-size:13px;font-weight:400;color:#222;letter-spacing:-0.2px;">Prompt Text</div>
<div class="t" style="left:395.8px;top:557.90px;font-size:13px;font-weight:400;color:#222;letter-spacing:-0.2px;">Operator</div>
<div class="t" style="left:395.8px;top:585.20px;font-size:13px;font-weight:400;color:#222;letter-spacing:-0.2px;">Default Value</div>
<div class="t" style="left:533.4px;top:499.10px;font-size:13px;font-weight:400;color:#222;letter-spacing:-0.15px;">DateFrom</div>
<div class="a" style="left:533.3px;top:524.4px;width:247.5px;height:23px;border:1px solid #dcdcdc;border-radius:3px;background:#fff"></div>
<div class="a" style="left:533.3px;top:551.4px;width:247.5px;height:23px;border:1px solid #dcdcdc;border-radius:3px;background:#fff"></div>
<div class="a" style="left:533.3px;top:577.3px;width:247.5px;height:23.3px;border:1px solid #dcdcdc;border-radius:3px;background:#fff"></div>
<div class="t" style="left:538.3px;top:528.83px;font-size:14.5px;font-weight:400;color:#444;">Enter Date From:</div>
<div class="t" style="left:538.3px;top:554.53px;font-size:14.5px;font-weight:400;color:#444;">On or After</div>
<svg class="a" style="left:764px;top:560px" width="9" height="6" viewBox="0 0 9 6"><path d="M0.5 0.8 L8.5 0.8 L4.5 5 Z" fill="#333"/></svg>
<svg class="a" style="left:762px;top:581px" width="14" height="14" viewBox="0 0 14 14"><rect x="1.5" y="2.5" width="11" height="10.5" fill="none" stroke="#333" stroke-width="1.2"/><path d="M1.5 4.6 H12.5" stroke="#333" stroke-width="1.4"/><path d="M4 1 V3.5 M10 1 V3.5" stroke="#333" stroke-width="1.4"/></svg>
<div class="a" style="left:786px;top:577px;width:33px;height:22px;background:#2e64d8;border-radius:3px;box-shadow:0 1px 2px rgba(0,0,0,0.2)"></div>
<svg class="a" style="left:799px;top:584px" width="9" height="9" viewBox="0 0 9 9"><path d="M4.4 1.4 V7.2 M1.9 2.85 L6.9 5.75 M1.9 5.75 L6.9 2.85" stroke="#fff" stroke-width="1.1"/></svg>
</body></html>
